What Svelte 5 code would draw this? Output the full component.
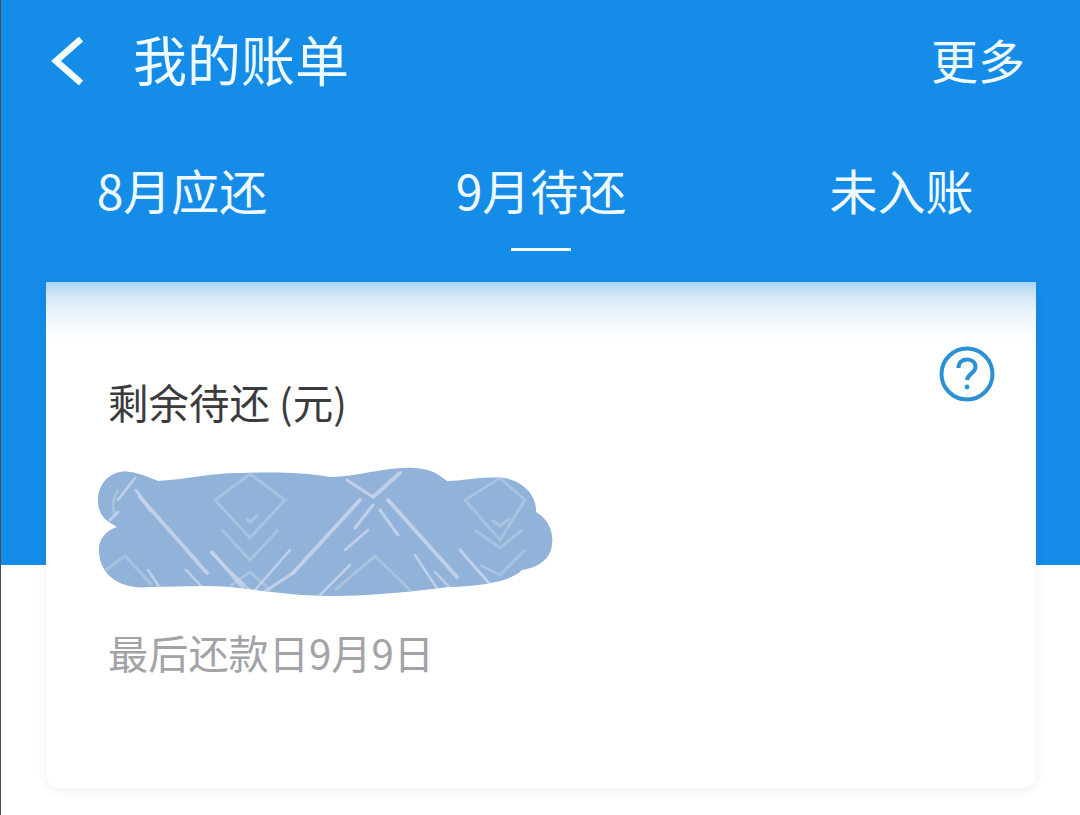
<script>
  const tabs = [
    { label: '8月应还', active: false },
    { label: '9月待还', active: true },
    { label: '未入账', active: false }
  ];
  const streaks = [
    { d: 'M140 497 L207 573', w: 4 },
    { d: 'M150 510 L136 490', w: 3 },
    { d: 'M360 500 L293 573', w: 4 },
    { d: 'M293 573 L258 596', w: 3 },
    { d: 'M388 500 L457 577', w: 4 },
    { d: 'M347 480 L373 497', w: 3 },
    { d: 'M400 473 L373 497', w: 4 },
    { d: 'M373 505 L355 528', w: 3 },
    { d: 'M380 510 L398 535', w: 3 },
    { d: 'M212 552 L245 590', w: 3.5 },
    { d: 'M210 552 L250 590', w: 2 },
    { d: 'M290 550 L255 590', w: 2.5 },
    { d: 'M186 570 L205 590', w: 2.5 },
    { d: 'M148 570 L160 588', w: 2.5 },
    { d: 'M315 600 L350 565', w: 2.5 },
    { d: 'M415 555 L438 590', w: 2.5 },
    { d: 'M460 550 L495 590', w: 3 },
    { d: 'M435 572 L452 590', w: 2.5 },
    { d: 'M110 520 L118 512', w: 3 },
    { d: 'M135 478 L118 500', w: 2.5 },
    { d: 'M345 550 L368 530', w: 2.5 }
  ];
  const faint = [
    'M215 500 L250 474 L285 500 L250 538 Z',
    'M222 530 L250 560 L278 530',
    'M246 518 L250 522 L258 515',
    'M465 500 L500 478 L525 500 L500 540 Z',
    'M475 530 L500 548 L522 530',
    'M492 520 L500 526 L510 518',
    'M103 572 L125 556 L152 585',
    'M335 590 L375 556 L412 592',
    'M225 590 L250 572 L270 590',
    'M118 490 C112 500 112 510 116 516',
    'M480 565 L500 575 L525 550'
  ];
</script>

<div class="page">
  <header class="hero">
    <div class="topbar">
      <div class="left">
        <svg class="back" viewBox="0 0 34 48" aria-hidden="true"><path d="M31 2 L6 24 L31 46" /></svg>
        <span class="title">我的账单</span>
      </div>
      <span class="more">更多</span>
    </div>
    <nav class="tabs">
      {#each tabs as tab}
        <div class="tab" class:active={tab.active}>{tab.label}</div>
      {/each}
    </nav>
  </header>

  <main class="card">
    <div class="label-row">
      <span class="label">剩余待还 (元)</span>
      <svg class="help" viewBox="0 0 56 56" aria-hidden="true">
        <circle cx="28" cy="28" r="25.5" />
        <path d="M19.5 22 C19.5 16 23.5 13.5 28 13.5 C33 13.5 36.5 16.5 36.5 21 C36.5 27 29 27.5 28 34" />
        <circle class="dot" cx="28" cy="41" r="2.4" />
      </svg>
    </div>
    <svg class="blot" viewBox="98 464 458 136" aria-hidden="true">
      <defs>
        <clipPath id="blot-shape">
          <path d="M98 500 C98 480 115 469 130 472 C140 473 150 478 158 481 C190 479 210 473 240 473 C275 472 300 472 330 477 C360 477 385 466 415 468 C433 469 440 476 447 481 C465 481 480 476 505 478 C525 482 537 497 536 512 C550 520 555 535 551 550 C547 562 535 568 522 570 C510 582 480 586 450 587 C420 590 380 596 330 596 C290 596 260 590 230 587 C200 585 175 587 150 587 C120 590 100 575 99 552 C98 540 105 531 117 527 C105 520 98 515 98 500 Z" />
        </clipPath>
      </defs>
      <g clip-path="url(#blot-shape)">
        <rect x="90" y="460" width="470" height="140" class="blot-fill" />
        {#each faint as d}<path {d} class="faint" />{/each}
        {#each streaks as s}<path d={s.d} class="streak" stroke-width={s.w} />{/each}
      </g>
    </svg>
    <p class="due">最后还款日9月9日</p>
  </main>
</div>

<style>
  :global(body) {
    margin: 0;
    background: #fff;
  }

  .page {
    position: relative;
    width: 1080px;
    height: 815px;
    overflow: hidden;
    box-sizing: border-box;
    border-left: 1px solid #4a4d52;
    background: #fff;
    font-family: "Noto Sans CJK SC", "Noto Sans", sans-serif;
  }

  .hero {
    height: 565px;
    background: #148ce8;
    color: #eefaff;
    box-sizing: border-box;
  }

  .topbar {
    display: flex;
    justify-content: space-between;
    align-items: center;
    height: 118px;
    padding: 0 55px 0 49px;
  }

  .left {
    display: flex;
    align-items: center;
    gap: 49px;
  }

  .back {
    width: 34px;
    height: 48px;
    margin-top: 4px;
    fill: none;
    stroke: #f2fbff;
    stroke-width: 6.5;
  }

  .title {
    font-size: 54px;
    line-height: 60px;
  }

  .more {
    font-size: 47px;
    line-height: 60px;
  }

  .tabs {
    display: grid;
    grid-template-columns: 362px 356px 1fr;
  }

  .tab {
    position: relative;
    height: 136px;
    padding-top: 41px;
    box-sizing: border-box;
    text-align: center;
    font-size: 48px;
    line-height: 60px;
  }

  .tab:last-child {
    padding-left: 4px;
  }

  .tab.active::after {
    content: "";
    position: absolute;
    left: 148px;
    bottom: 3px;
    width: 60px;
    height: 3px;
    background: #f2fbff;
  }

  .card {
    position: absolute;
    left: 45px;
    top: 282px;
    width: 990px;
    height: 506px;
    box-sizing: border-box;
    padding: 64px 41px 0 62px;
    border-radius: 0 0 14px 14px;
    background: linear-gradient(#a9d2f1 0, #d3e8f7 14px, #eef6fc 34px, #fbfdfe 52px, #fff 66px);
    box-shadow: 0 3px 10px rgba(70, 70, 110, 0.08);
    color: #3b3b3d;
  }

  .label-row {
    display: flex;
    justify-content: space-between;
    align-items: flex-start;
    height: 118px;
  }

  .label {
    margin-top: 21px;
    font-size: 40.5px;
    line-height: 70px;
  }

  .help {
    width: 56px;
    height: 56px;
    fill: none;
    stroke: #2b90d4;
    stroke-width: 4;
  }

  .help .dot {
    fill: #2b90d4;
    stroke: none;
  }

  .blot {
    display: block;
    width: 458px;
    height: 136px;
    margin-left: -10px;
    filter: blur(0.6px);
  }

  .blot-fill {
    fill: #91b2d9;
  }

  .streak {
    fill: none;
    stroke: #c9d4ea;
    stroke-linecap: round;
    opacity: 0.85;
  }

  .faint {
    fill: none;
    stroke: #a8c2e0;
    stroke-width: 3;
  }

  .due {
    margin: 22px 0 0;
    font-size: 40.2px;
    line-height: 60px;
    color: #a3a2a6;
  }
</style>
